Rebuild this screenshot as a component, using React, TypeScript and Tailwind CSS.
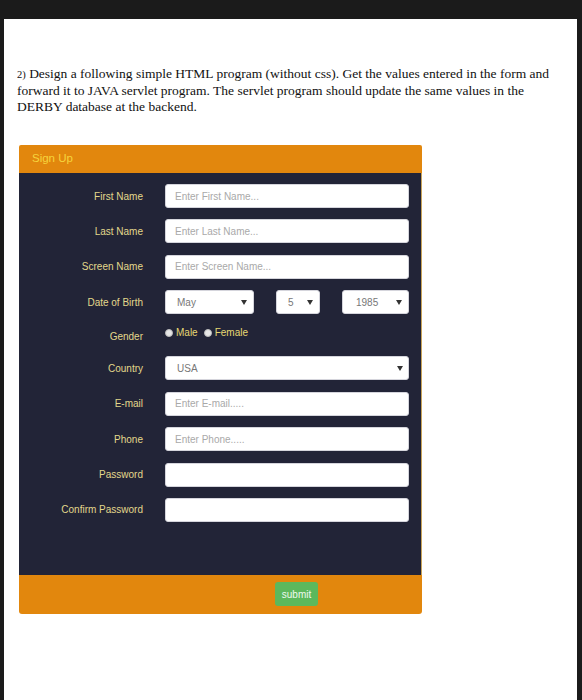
import React from "react";

const Arrow = () => (
  <svg width="6" height="5" viewBox="0 0 6 5" className="shrink-0">
    <path d="M0 0 L6 0 L3 5 Z" fill="#333" />
  </svg>
);

const Input = ({ placeholder }: { placeholder?: string }) => (
  <div className="h-[24px] bg-white rounded-[3px] border border-[#d5d5dc] flex items-center px-[9px] text-[10px] text-[#a9a9a9] font-['Liberation_Sans',Arial,sans-serif]">
    {placeholder}
  </div>
);

const Select = ({ value, className }: { value: string; className: string }) => (
  <div className={`h-[24px] bg-white rounded-[3px] border border-[#d5d5dc] flex items-center justify-between text-[10px] text-[#777] font-['Liberation_Sans',Arial,sans-serif] ${className}`}>
    <span>{value}</span>
    <Arrow />
  </div>
);

const Label = ({ children }: { children: React.ReactNode }) => (
  <div className="text-right text-[10px] text-[#e3d88c] font-['Liberation_Sans',Arial,sans-serif]">{children}</div>
);

const Row = ({ label, children, h = "h-[24px]" }: { label: string; children: React.ReactNode; h?: string }) => (
  <div className={`grid grid-cols-[124px_1fr] gap-x-[22px] items-center ${h}`}>
    <Label>{label}</Label>
    <div>{children}</div>
  </div>
);

export default function App() {
  return (
    <div className="min-h-[700px] bg-[#1b1b1b] pt-[19px] pl-[4px] pr-[5px]">
      <div className="bg-white h-[681px] pt-[47px]">
        <p className="pl-[13px] pr-[6px] text-[13.5px] leading-[16px] text-[#111] font-['Liberation_Serif','Times_New_Roman',serif]">
          <span className="text-[10.5px]">2)</span> Design a following simple HTML program (without css). Get the values entered in the form and
          <br />
          forward it to JAVA servlet program. The servlet program should update the same values in the
          <br />
          DERBY database at the backend.
        </p>

        <div className="ml-[15px] mt-[30px] w-[403px]">
          <div className="h-[28px] bg-[#e2870d] rounded-t-[2px] flex items-center pl-[13px] text-[11.5px] text-[#f6d43c] font-['Liberation_Sans',Arial,sans-serif]">
            Sign Up
          </div>
          <div className="bg-[#222437] border-r border-[#c9a45a] pt-[11px] pb-[53px] pr-[12px] flex flex-col gap-[11.45px]">
            <Row label="First Name"><Input placeholder="Enter First Name..." /></Row>
            <Row label="Last Name"><Input placeholder="Enter Last Name..." /></Row>
            <Row label="Screen Name"><Input placeholder="Enter Screen Name..." /></Row>
            <Row label="Date of Birth">
              <div className="flex gap-[22px]">
                <Select value="May" className="w-[89px] pl-[11px] pr-[6px]" />
                <Select value="5" className="w-[44px] pl-[11px] pr-[6px]" />
                <Select value="1985" className="w-[67px] pl-[13px] pr-[6px]" />
              </div>
            </Row>
            <div className="grid grid-cols-[124px_1fr] gap-x-[22px] h-[19px]">
              <div className="self-end pb-[1px]"><Label>Gender</Label></div>
              <div className="flex items-center h-[14px] text-[10px] text-[#e6d873] font-['Liberation_Sans',Arial,sans-serif]">
                <span className="w-[8px] h-[8px] rounded-full bg-[#e6e6e6] border border-[#bbb] mr-[3px]" />
                <span>Male</span>
                <span className="w-[8px] h-[8px] rounded-full bg-[#e6e6e6] border border-[#bbb] ml-[6px] mr-[3px]" />
                <span>Female</span>
              </div>
            </div>
            <Row label="Country"><Select value="USA" className="w-full pl-[11px] pr-[5px]" /></Row>
            <Row label="E-mail"><Input placeholder="Enter E-mail....." /></Row>
            <Row label="Phone"><Input placeholder="Enter Phone....." /></Row>
            <Row label="Password"><Input /></Row>
            <Row label="Confirm Password"><Input /></Row>
          </div>
          <div className="h-[39px] bg-[#e2870d] rounded-b-[3px] flex items-center pl-[256px]">
            <div className="w-[43px] h-[24px] bg-[#5cb85c] rounded-[3px] flex items-center justify-center text-[10px] text-[#eef8ee] font-['Liberation_Sans',Arial,sans-serif]">
              submit
            </div>
          </div>
        </div>
      </div>
    </div>
  );
}
